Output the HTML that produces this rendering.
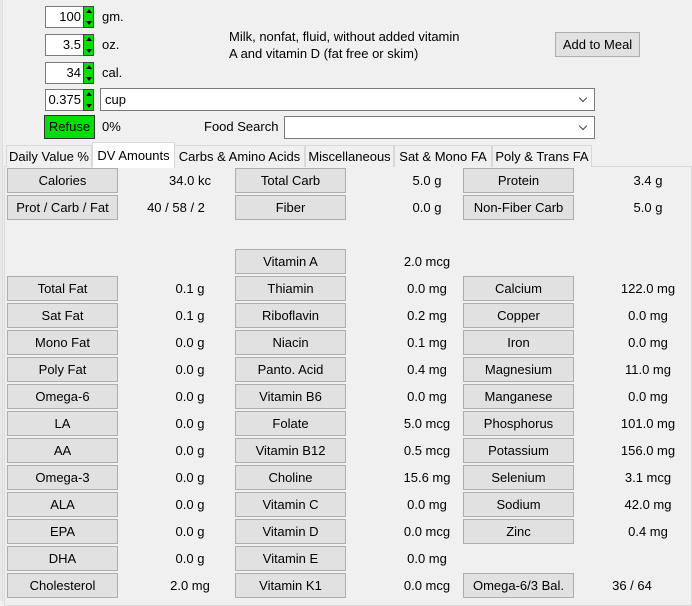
<!DOCTYPE html><html><head><style>
body{margin:0;width:692px;height:601px;background:#f0f0f0;font-family:"Liberation Sans",sans-serif;font-size:13px;color:#000;position:relative;overflow:hidden}
div{position:absolute;box-sizing:border-box;white-space:nowrap}
.in{background:#fff;border:1px solid #7a7a7a;border-right:none;height:22px;width:38px;left:45px;text-align:right;padding-right:2px;line-height:20px}
.sp{left:83px;width:11px;height:22px;background:#00e000;border:1px solid #444}
.sp:before{content:"";position:absolute;left:2px;top:2px;border:3px solid transparent;border-bottom:4px solid #000;border-top:none}
.sp:after{content:"";position:absolute;left:2px;bottom:2px;border:3px solid transparent;border-top:4px solid #000;border-bottom:none}
.lb{left:102px;line-height:22px}
.b{width:111px;height:25px;background:#e1e1e1;border:1px solid #adadad;text-align:center;line-height:23px}
.v{text-align:center;line-height:25px}
.c1{left:7px}.c2{left:235px}.c3{left:463px}
.v1{left:140px;width:100px}.v2{left:377px;width:100px}.v3{left:598px;width:100px}
.tab{top:145px;height:22px;border:1px solid #d9d9d9;border-bottom:none;line-height:22px;text-align:center;background:#f0f0f0}
.dd{background:#fff;border:1px solid #7a7a7a;height:23px;line-height:21px;padding-left:4px}
.dd:after{content:"";position:absolute;right:8px;top:6px;width:5px;height:5px;border-right:1px solid #444;border-bottom:1px solid #444;transform:rotate(45deg)}
</style></head><body>
<div style="left:0;top:0;width:3px;height:601px;background:#e8e8e8;border-right:1px solid #ddd"></div>
<div class="in" style="top:6px">100</div><div class="sp" style="top:6px"></div><div class="lb" style="top:6px">gm.</div>
<div class="in" style="top:34px">3.5</div><div class="sp" style="top:34px"></div><div class="lb" style="top:34px">oz.</div>
<div class="in" style="top:62px">34</div><div class="sp" style="top:62px"></div><div class="lb" style="top:62px">cal.</div>
<div class="in" style="top:89px">0.375</div><div class="sp" style="top:89px"></div>
<div class="dd" style="left:100px;top:88px;width:495px">cup</div>
<div style="left:44px;top:115px;width:51px;height:24px;background:#00e000;border:1px solid #333;text-align:center;line-height:22px">Refuse</div>
<div style="left:102px;top:115px;line-height:24px">0%</div>
<div style="left:204px;top:115px;line-height:24px">Food Search</div>
<div class="dd" style="left:284px;top:116px;width:311px"></div>
<div style="left:229px;top:28px;line-height:17px">Milk, nonfat, fluid, without added vitamin<br>A and vitamin D (fat free or skim)</div>
<div style="left:555px;top:32px;width:85px;height:25px;background:#e1e1e1;border:1px solid #adadad;text-align:center;line-height:23px">Add to Meal</div>
<div style="left:4px;top:166px;width:688px;height:440px;border:1px solid #d9d9d9"></div>
<div class="tab" style="left:6px;width:86px">Daily Value %</div>
<div class="tab" style="left:92px;width:83px;top:142px;height:26px;background:#fff;line-height:26px;z-index:2">DV Amounts</div>
<div class="tab" style="left:174px;width:131px">Carbs &amp; Amino Acids</div>
<div class="tab" style="left:305px;width:89px">Miscellaneous</div>
<div class="tab" style="left:394px;width:98px">Sat &amp; Mono FA</div>
<div class="tab" style="left:492px;width:100px">Poly &amp; Trans FA</div>

<div class="b c1" style="top:168px">Calories</div><div class="v v1" style="top:168px">34.0 kc</div>
<div class="b c2" style="top:168px">Total Carb</div><div class="v v2" style="top:168px">5.0 g</div>
<div class="b c3" style="top:168px">Protein</div><div class="v v3" style="top:168px">3.4 g</div>
<div class="b c1" style="top:195px">Prot / Carb / Fat</div><div class="v" style="left:126px;width:100px;top:195px">40 / 58 / 2</div>
<div class="b c2" style="top:195px">Fiber</div><div class="v v2" style="top:195px">0.0 g</div>
<div class="b c3" style="top:195px">Non-Fiber Carb</div><div class="v v3" style="top:195px">5.0 g</div>
<div class="b c2" style="top:249px">Vitamin A</div><div class="v v2" style="top:249px">2.0 mcg</div>

<div class="b c1" style="top:276px">Total Fat</div><div class="v v1" style="top:276px">0.1 g</div>
<div class="b c2" style="top:276px">Thiamin</div><div class="v v2" style="top:276px">0.0 mg</div>
<div class="b c3" style="top:276px">Calcium</div><div class="v v3" style="top:276px">122.0 mg</div>
<div class="b c1" style="top:303px">Sat Fat</div><div class="v v1" style="top:303px">0.1 g</div>
<div class="b c2" style="top:303px">Riboflavin</div><div class="v v2" style="top:303px">0.2 mg</div>
<div class="b c3" style="top:303px">Copper</div><div class="v v3" style="top:303px">0.0 mg</div>
<div class="b c1" style="top:330px">Mono Fat</div><div class="v v1" style="top:330px">0.0 g</div>
<div class="b c2" style="top:330px">Niacin</div><div class="v v2" style="top:330px">0.1 mg</div>
<div class="b c3" style="top:330px">Iron</div><div class="v v3" style="top:330px">0.0 mg</div>
<div class="b c1" style="top:357px">Poly Fat</div><div class="v v1" style="top:357px">0.0 g</div>
<div class="b c2" style="top:357px">Panto. Acid</div><div class="v v2" style="top:357px">0.4 mg</div>
<div class="b c3" style="top:357px">Magnesium</div><div class="v v3" style="top:357px">11.0 mg</div>
<div class="b c1" style="top:384px">Omega-6</div><div class="v v1" style="top:384px">0.0 g</div>
<div class="b c2" style="top:384px">Vitamin B6</div><div class="v v2" style="top:384px">0.0 mg</div>
<div class="b c3" style="top:384px">Manganese</div><div class="v v3" style="top:384px">0.0 mg</div>
<div class="b c1" style="top:411px">LA</div><div class="v v1" style="top:411px">0.0 g</div>
<div class="b c2" style="top:411px">Folate</div><div class="v v2" style="top:411px">5.0 mcg</div>
<div class="b c3" style="top:411px">Phosphorus</div><div class="v v3" style="top:411px">101.0 mg</div>
<div class="b c1" style="top:438px">AA</div><div class="v v1" style="top:438px">0.0 g</div>
<div class="b c2" style="top:438px">Vitamin B12</div><div class="v v2" style="top:438px">0.5 mcg</div>
<div class="b c3" style="top:438px">Potassium</div><div class="v v3" style="top:438px">156.0 mg</div>
<div class="b c1" style="top:465px">Omega-3</div><div class="v v1" style="top:465px">0.0 g</div>
<div class="b c2" style="top:465px">Choline</div><div class="v v2" style="top:465px">15.6 mg</div>
<div class="b c3" style="top:465px">Selenium</div><div class="v v3" style="top:465px">3.1 mcg</div>
<div class="b c1" style="top:492px">ALA</div><div class="v v1" style="top:492px">0.0 g</div>
<div class="b c2" style="top:492px">Vitamin C</div><div class="v v2" style="top:492px">0.0 mg</div>
<div class="b c3" style="top:492px">Sodium</div><div class="v v3" style="top:492px">42.0 mg</div>
<div class="b c1" style="top:519px">EPA</div><div class="v v1" style="top:519px">0.0 g</div>
<div class="b c2" style="top:519px">Vitamin D</div><div class="v v2" style="top:519px">0.0 mcg</div>
<div class="b c3" style="top:519px">Zinc</div><div class="v v3" style="top:519px">0.4 mg</div>
<div class="b c1" style="top:546px">DHA</div><div class="v v1" style="top:546px">0.0 g</div>
<div class="b c2" style="top:546px">Vitamin E</div><div class="v v2" style="top:546px">0.0 mg</div>
<div class="b c1" style="top:573px">Cholesterol</div><div class="v v1" style="top:573px">2.0 mg</div>
<div class="b c2" style="top:573px">Vitamin K1</div><div class="v v2" style="top:573px">0.0 mcg</div>
<div class="b c3" style="top:573px">Omega-6/3 Bal.</div><div class="v" style="left:582px;width:100px;top:573px">36 / 64</div>
</body></html>
